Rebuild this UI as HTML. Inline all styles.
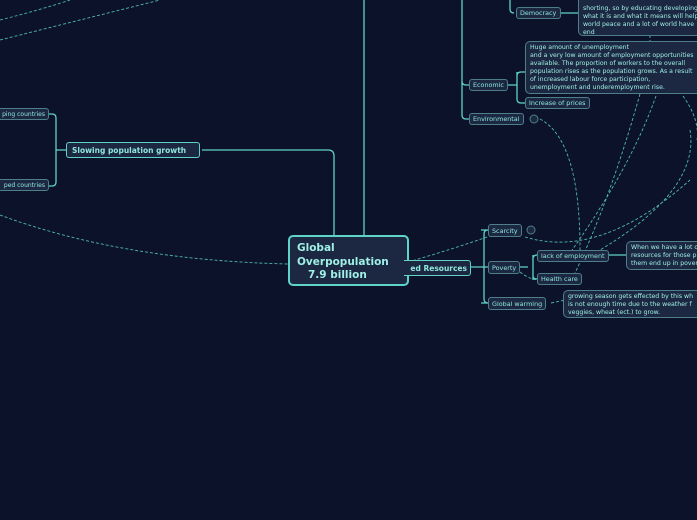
<!DOCTYPE html>
<html><head><style>
body{margin:0;width:697px;height:520px;background:#0b1229;overflow:hidden;position:relative;font-family:"DejaVu Sans","Liberation Sans",sans-serif}
.n{position:absolute;box-sizing:border-box;background:#1c2742;border:1px solid #4e7f88;border-radius:3px;color:#8fe6dc;font-size:6.4px;display:flex;align-items:center;padding:0 3px;white-space:nowrap}
.t{position:absolute;box-sizing:border-box;background:#1c2742;border:1px solid #4e7f88;border-radius:5px;color:#9eeee4;font-size:6.2px;line-height:8px;padding:2px 4px;white-space:nowrap;overflow:hidden}
svg{position:absolute;left:0;top:0}
</style></head><body>
<svg width="697" height="520" fill="none">
<g stroke="#5fd3c8" stroke-width="1.3">
<path d="M364 0V236M334 236V156q0-6-6-6H202"/>
<path d="M48 114h4q4 0 4 4v64q0 4-4 4h-4M56 150h10"/>
<path d="M470 267h11M481 230h7M481 303h7M484 234V299q0 4 4 4M484 234q0-4 4-4M481 267h7"/>
<path d="M519 267h9M533 255v25M533 259q0-4 4-4M533 276q0 3 4 3M608 255h18"/>
<path d="M462 0V115q0 4 4 4h3M462 81q0 4 4 4h3M510 0V9q0 4 4 4M560 13h18M507 85h10M517 72v27M517 76q0-4 4-4h4M517 99q0 4 4 4h4"/>
</g>
<g stroke="#4fb8b0" stroke-width="0.9" stroke-dasharray="3 2">
<path d="M0 40Q80 20 160 0M0 20Q40 10 70 0M0 215Q120 260 288 264"/>
<path d="M408 262Q450 250 490 236"/>
<path d="M540 119Q580 140 580 250M525 237Q600 260 690 180M640 94Q610 200 575 273M656 96Q630 170 565 260M690 130Q700 190 600 250M683 96Q700 120 697 140M551 303Q565 300 565 300M520 272Q530 280 540 280M650 35v6"/>
</g>
<circle cx="534" cy="119" r="4" fill="#1c2742" stroke="#4e7f88"/>
<circle cx="531" cy="230" r="4" fill="#1c2742" stroke="#4e7f88"/>
</svg>
<div class="n" style="left:288px;top:235px;width:121px;height:51px;border:2px solid #5fd3c8;border-radius:5px;font-size:10.5px;line-height:13.5px;font-weight:bold;padding:5px 7px 0;color:#9ff0e6;display:block">Global<br>Overpopulation<br>&nbsp;&nbsp;&nbsp;7.9 billion</div>
<div class="n" style="left:404px;top:260px;width:67px;height:16px;border:1.5px solid #5fd3c8;border-left:none;font-weight:bold;font-size:7.5px;justify-content:flex-end;border-radius:0 3px 3px 0">ed Resources</div>
<div class="n" style="left:66px;top:142px;width:134px;height:16px;border:1.5px solid #5fd3c8;font-weight:bold;font-size:7.5px;padding-left:5px">Slowing population growth</div>
<div class="n" style="left:-3px;top:108px;width:52px;height:12px;font-size:6px;justify-content:flex-end">ping countries</div>
<div class="n" style="left:-3px;top:179px;width:52px;height:12px;font-size:6px;justify-content:flex-end">ped countries</div>
<div class="n" style="left:516px;top:7px;width:45px;height:12px">Democracy</div>
<div class="n" style="left:469px;top:79px;width:39px;height:12px">Economic</div>
<div class="n" style="left:469px;top:113px;width:55px;height:12px">Environmental</div>
<div class="n" style="left:525px;top:97px;width:65px;height:12px">Increase of prices</div>
<div class="t" style="left:578px;top:-6px;width:130px;height:42px">&nbsp;<br>shorting, so by educating developing<br>what it is and what it means will help<br>world peace and a lot of world have<br>end</div>
<div class="t" style="left:525px;top:41px;width:180px;height:53px">Huge amount of unemployment<br>and a very low amount of employment opportunities<br>available. The proportion of workers to the overall<br>population rises as the population grows. As a result<br>of increased labour force participation,<br>unemployment and underemployment rise.</div>
<div class="n" style="left:488px;top:224px;width:34px;height:13px">Scarcity</div>
<div class="n" style="left:488px;top:261px;width:32px;height:13px">Poverty</div>
<div class="n" style="left:488px;top:297px;width:58px;height:13px">Global warming</div>
<div class="n" style="left:537px;top:250px;width:72px;height:12px">lack of employment</div>
<div class="n" style="left:537px;top:273px;width:45px;height:12px">Health care</div>
<div class="t" style="left:626px;top:241px;width:80px;height:29px">When we have a lot of<br>resources for those p<br>them end up in pover</div>
<div class="t" style="left:563px;top:290px;width:140px;height:28px">growing season gets effected by this wh<br>is not enough time due to the weather f<br>veggies, wheat (ect.) to grow.</div>
</body></html>
